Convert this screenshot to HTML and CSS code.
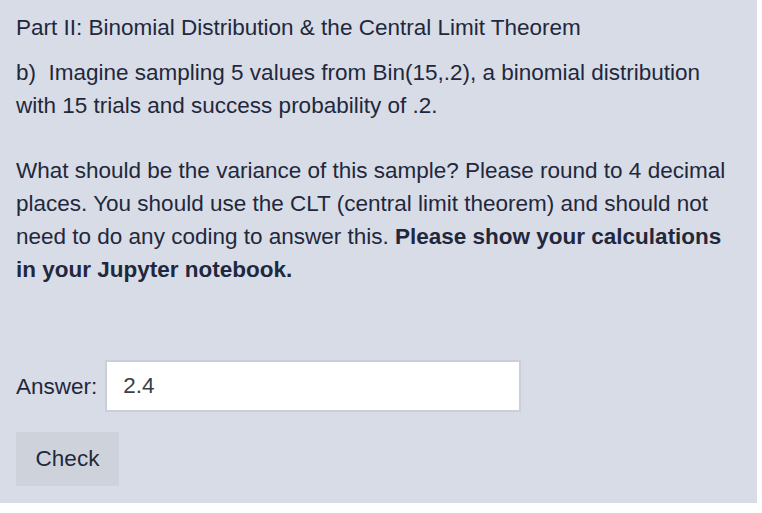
FILE: index.html
```html
<!DOCTYPE html>
<html>
<head>
<meta charset="utf-8">
<link rel="stylesheet" href="styles.css">
</head>
<body>
<div class="panel">
  <div class="title">Part II: Binomial Distribution &amp; the Central Limit Theorem</div>
  <p class="q">b)&nbsp; Imagine sampling 5 values from Bin(15,.2), a binomial distribution with 15 trials and success probability of .2.</p>
  <p class="q2">What should be the variance of this sample? Please round to 4 decimal places. You should use the CLT (central limit theorem) and should not need to do any coding to answer this. <strong>Please show your calculations in your Jupyter notebook.</strong></p>
  <div class="answer-row">
    <label class="answer-label" for="ans">Answer:</label>
    <input class="answer-input" id="ans" type="text" value="2.4">
  </div>
  <button class="check-btn" type="button">Check</button>
</div>
</body>
</html>
```

FILE: styles.css
```css
html, body {
  margin: 0;
  padding: 0;
  background: #ffffff;
}
.panel {
  box-sizing: border-box;
  width: 757px;
  height: 503px;
  background: #d8dce6;
  padding: 11px 20px 0 16px;
  font-family: "Liberation Sans", Arial, sans-serif;
  font-size: 22.5px;
  line-height: 33px;
  color: #1f283c;
}
.title {
  margin: 0;
}
.q {
  margin: 12px 0 0 0;
}
.q2 {
  margin: 32px 0 0 0;
}
.q2 strong {
  font-weight: bold;
}
.answer-row {
  display: flex;
  align-items: center;
  gap: 8px;
  margin-top: 74px;
}
.answer-label {
  font-size: 22.5px;
}
.answer-input {
  box-sizing: border-box;
  width: 416px;
  height: 52px;
  border: 2px solid #cbd0d8;
  background: #ffffff;
  padding: 0 16px;
  font-family: "Liberation Sans", Arial, sans-serif;
  font-size: 22.5px;
  color: #3b404b;
  outline: none;
  margin: 0;
}
.check-btn {
  display: block;
  box-sizing: border-box;
  margin-top: 20px;
  width: 103px;
  height: 54px;
  border: none;
  background: #ced3db;
  font-family: "Liberation Sans", Arial, sans-serif;
  font-size: 22.5px;
  color: #1f283c;
  padding: 0;
}
```
